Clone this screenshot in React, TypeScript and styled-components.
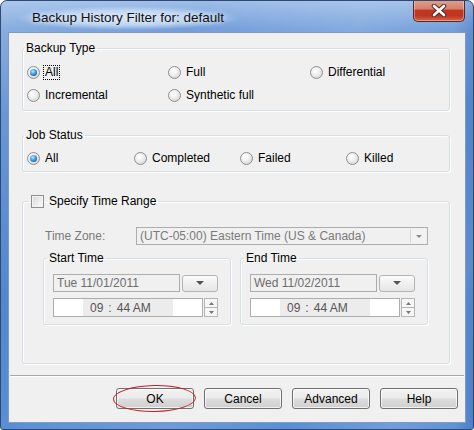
import React from "react";
import styled, { createGlobalStyle } from "styled-components";

const Global = createGlobalStyle`
  html, body { margin: 0; padding: 0; background: #ffffff; }
  body { width: 474px; height: 430px; overflow: hidden; }
  * { box-sizing: border-box; }
`;

const UI = `"Liberation Sans", Arial, sans-serif`;

const Window = styled.div`
  width: 474px;
  height: 430px;
  display: flex;
  flex-direction: column;
  border: 1px solid #2f4a70;
  border-radius: 7px 7px 3px 3px;
  overflow: hidden;
  font-family: ${UI};
  font-size: 12px;
  color: #000;
  background:
    linear-gradient(115deg, rgba(255,255,255,0.16) 0%, rgba(255,255,255,0) 30%, rgba(255,255,255,0.12) 55%, rgba(255,255,255,0) 72%, rgba(255,255,255,0.14) 88%, rgba(255,255,255,0) 100%),
    linear-gradient(90deg, rgba(0,0,0,0) 0%, rgba(0,0,0,0) 96%, rgba(20,60,140,0.18) 100%),
    linear-gradient(180deg, #9dbde8 0px, #749fda 28px, #5589d1 110px, #4a80cc 300px, #5a8fd6 430px);
`;

const TitleBar = styled.div`
  height: 31px;
  flex: none;
  display: flex;
  align-items: flex-start;
  justify-content: space-between;
`;

const TitleText = styled.div`
  margin-top: 5px;
  margin-left: 15px;
  padding: 3px 16px 4px 16px;
  font-size: 13.5px;
  line-height: 17px;
  color: #101010;
  background: radial-gradient(closest-side, rgba(225,238,252,0.85) 0%, rgba(210,228,248,0.7) 60%, rgba(200,222,246,0) 100%);
  text-shadow: 0 0 6px rgba(255,255,255,0.9);
`;

const CloseButton = styled.div`
  width: 52px;
  height: 22px;
  margin-top: -1px;
  margin-right: 8px;
  display: flex;
  align-items: center;
  justify-content: center;
  border: 1px solid #5a2620;
  border-top: none;
  border-radius: 0 0 5px 5px;
  background: linear-gradient(180deg, #e4a190 0%, #d5806a 42%, #c23621 50%, #bd3520 75%, #d6684a 100%);
  box-shadow: inset 0 0 0 1px rgba(255,255,255,0.35);
`;

const Client = styled.div`
  flex: 1;
  margin: 0 7px 6px 7px;
  border: 1px solid #7f9bc2;
  background: #f0f0f0;
  display: flex;
  flex-direction: column;
`;

const Body = styled.div`
  padding: 8px 15px 0 13px;
  display: flex;
  flex-direction: column;
`;

const Group = styled.fieldset<{ $pad: string; $mt: number; $w?: number }>`
  margin: ${p => p.$mt}px 0 0 0;
  min-width: 0;
  width: ${p => (p.$w ? `${p.$w}px` : "auto")};
  border: 1px solid #d5dfe5;
  border-radius: 3px;
  box-shadow: inset 1px 1px 0 #ffffff, 1px 1px 0 #ffffff;
  padding: ${p => p.$pad};
`;

const Legend = styled.legend<{ $shift: number }>`
  padding: 0 2px;
  margin-left: ${p => p.$shift}px;
  height: 14px;
  line-height: 14px;
  font-size: 12px;
  color: #000;
  display: flex;
  align-items: center;
  gap: 5px;
`;

const RadioGrid = styled.div<{ $cols: string }>`
  display: grid;
  grid-template-columns: ${p => p.$cols};
  grid-auto-rows: 23px;
`;

const Option = styled.label`
  display: flex;
  align-items: center;
  gap: 3px;
  white-space: nowrap;
`;

const RadioCircle = styled.span<{ $on?: boolean }>`
  position: relative;
  width: 13px;
  height: 13px;
  flex: none;
  border-radius: 50%;
  border: 1px solid #8e8f8f;
  background: radial-gradient(circle at 40% 35%, #ffffff 0%, #f2f2f2 35%, #cdcdcd 100%);
  &::after {
    content: "";
    display: ${p => (p.$on ? "block" : "none")};
    position: absolute;
    left: 2px;
    top: 2px;
    width: 7px;
    height: 7px;
    border-radius: 50%;
    background: radial-gradient(circle at 40% 35%, #c4ecff 0%, #4aa3e8 40%, #1b5aa6 80%, #0f3e7c 100%);
  }
`;

const OptionText = styled.span<{ $focus?: boolean }>`
  padding: 0 1px;
  line-height: 13px;
  border: 1px ${p => (p.$focus ? "dotted #000" : "solid transparent")};
`;

const CheckBox = styled.span`
  width: 13px;
  height: 13px;
  flex: none;
  border: 1px solid #8e8f8f;
  background: linear-gradient(135deg, #d8d8d8 0%, #eeeeee 60%, #fbfbfb 100%);
  box-shadow: inset 0 0 0 1px #f4f4f4;
`;

const Row = styled.div<{ $mt?: number; $gap?: number }>`
  display: flex;
  align-items: center;
  margin-top: ${p => p.$mt ?? 0}px;
  gap: ${p => p.$gap ?? 0}px;
`;

const FieldLabel = styled.span`
  width: 93px;
  flex: none;
  padding-left: 2px;
  color: #7a7a7a;
`;

const Combo = styled.div`
  flex: 1;
  height: 18px;
  display: flex;
  align-items: center;
  border: 1px solid #adadad;
  background: #f0f0f0;
  color: #7a7a7a;
  padding: 0 1px 0 3px;
`;

const ComboText = styled.span`
  flex: 1;
  white-space: nowrap;
`;

const ComboArrow = styled.div`
  width: 16px;
  height: 14px;
  display: flex;
  align-items: center;
  justify-content: center;
  border-left: 1px solid #d6d6d6;
  background: #f2f2f2;
`;

const Columns = styled.div`
  display: flex;
  gap: 9px;
  margin-top: 6px;
`;

const DateBox = styled.div`
  flex: 1;
  height: 18px;
  display: flex;
  align-items: center;
  padding-left: 3px;
  border: 1px solid #adadad;
  background: #f0f0f0;
  color: #6d6d6d;
  white-space: nowrap;
`;

const DropButton = styled.div`
  width: 36px;
  height: 17px;
  flex: none;
  display: flex;
  align-items: center;
  justify-content: center;
  border: 1px solid #b4b4b4;
  border-radius: 3px;
  background: linear-gradient(180deg, #fbfbfb 0%, #f0f0f0 50%, #e6e6e6 100%);
`;

const TimeBox = styled.div`
  flex: 1;
  height: 19px;
  display: flex;
  align-items: stretch;
  border: 1px solid #adadad;
  background: #ffffff;
  padding: 0 0 0 29px;
`;

const TimeInner = styled.div`
  width: 90px;
  display: flex;
  align-items: center;
  padding-left: 7px;
  background: #ececec;
  color: #555;
  white-space: nowrap;
`;

const TimeSep = styled.span`
  margin: 0 5px 0 5px;
`;

const Spin = styled.div`
  width: 14px;
  height: 19px;
  flex: none;
  display: flex;
  flex-direction: column;
  border: 1px solid #b5b5b5;
  background: #f6f6f6;
`;

const SpinHalf = styled.div<{ $up?: boolean }>`
  flex: 1;
  display: flex;
  align-items: center;
  justify-content: center;
  border-bottom: ${p => (p.$up ? "1px solid #b5b5b5" : "none")};
`;

const Separator = styled.div`
  margin: 11px 1px 0 1px;
  height: 2px;
  border-top: 1px solid #a8a8a8;
  border-bottom: 1px solid #ffffff;
`;

const Footer = styled.div`
  display: flex;
  justify-content: flex-end;
  gap: 10px;
  padding: 11px 7px 0 0;
`;

const ButtonWrap = styled.div`
  position: relative;
`;

const Button = styled.div`
  width: 78px;
  height: 21px;
  display: flex;
  align-items: center;
  justify-content: center;
  border: 1px solid #707070;
  border-radius: 3px;
  background: linear-gradient(180deg, #f2f2f2 0%, #ebebeb 48%, #dddddd 52%, #cfcfcf 100%);
  box-shadow: inset 0 0 0 1px rgba(255,255,255,0.7);
  font-size: 12px;
  color: #000;
`;

const Ellipse = styled.div`
  position: absolute;
  left: -3px;
  top: -3px;
  width: 83px;
  height: 27px;
  border: 1.5px solid #c42030;
  border-radius: 50%;
  transform: rotate(-1deg);
  pointer-events: none;
`;

const DownTri = ({ w = 8, h = 4, c = "#555" }: { w?: number; h?: number; c?: string }) => (
  <svg width={w} height={h} viewBox={`0 0 ${w} ${h}`}>
    <polygon points={`0,0 ${w},0 ${w / 2},${h}`} fill={c} />
  </svg>
);

const UpTri = ({ c = "#777" }: { c?: string }) => (
  <svg width="5" height="3" viewBox="0 0 5 3">
    <polygon points="0,3 5,3 2.5,0" fill={c} />
  </svg>
);

const Radio = ({ label, on, focus }: { label: string; on?: boolean; focus?: boolean }) => (
  <Option>
    <RadioCircle $on={on} />
    <OptionText $focus={focus}>{label}</OptionText>
  </Option>
);

const TimeGroup = ({ title, date }: { title: string; date: string }) => (
  <Group $mt={0} $w={188} $pad="9px 12px 7px 9px">
    <Legend $shift={-6}>{title}</Legend>
    <Row $gap={2}>
      <DateBox>{date}</DateBox>
      <DropButton>
        <DownTri />
      </DropButton>
    </Row>
    <Row $mt={6} $gap={1}>
      <TimeBox>
        <TimeInner>
          <span>09</span>
          <TimeSep>:</TimeSep>
          <span>44 AM</span>
        </TimeInner>
      </TimeBox>
      <Spin>
        <SpinHalf $up>
          <UpTri />
        </SpinHalf>
        <SpinHalf>
          <DownTri w={5} h={3} c="#777" />
        </SpinHalf>
      </Spin>
    </Row>
  </Group>
);

export default function App() {
  return (
    <>
      <Global />
      <Window>
        <TitleBar>
          <TitleText>Backup History Filter for: default</TitleText>
          <CloseButton>
            <svg width="16" height="13" viewBox="0 0 16 13">
              <path d="M3 2 L13 11 M13 2 L3 11" stroke="#5a2a24" strokeWidth="4.6" strokeLinecap="round" />
              <path d="M3 2 L13 11 M13 2 L3 11" stroke="#ffffff" strokeWidth="2.6" strokeLinecap="round" />
            </svg>
          </CloseButton>
        </TitleBar>
        <Client>
          <Body>
            <Group $mt={0} $pad="6px 0 3px 4px">
              <Legend $shift={-3}>Backup Type</Legend>
              <RadioGrid $cols="141px 142px auto">
                <Radio label="All" on focus />
                <Radio label="Full" />
                <Radio label="Differential" />
                <Radio label="Incremental" />
                <Radio label="Synthetic full" />
              </RadioGrid>
            </Group>
            <Group $mt={17} $pad="5px 0 1px 4px">
              <Legend $shift={-3}>Job Status</Legend>
              <RadioGrid $cols="107px 106px 106px auto">
                <Radio label="All" on />
                <Radio label="Completed" />
                <Radio label="Failed" />
                <Radio label="Killed" />
              </RadioGrid>
            </Group>
            <Group $mt={22} $pad="19px 21px 38px 20px">
              <Legend $shift={-14}>
                <CheckBox />
                <span>Specify Time Range</span>
              </Legend>
              <Row>
                <FieldLabel>Time Zone:</FieldLabel>
                <Combo>
                  <ComboText>(UTC-05:00) Eastern Time (US &amp; Canada)</ComboText>
                  <ComboArrow>
                    <DownTri w={6} h={3} c="#8a8a8a" />
                  </ComboArrow>
                </Combo>
              </Row>
              <Columns>
                <TimeGroup title="Start Time" date="Tue 11/01/2011" />
                <TimeGroup title="End Time" date="Wed 11/02/2011" />
              </Columns>
            </Group>
          </Body>
          <Separator />
          <Footer>
            <ButtonWrap>
              <Button>OK</Button>
              <Ellipse />
            </ButtonWrap>
            <Button>Cancel</Button>
            <Button>Advanced</Button>
            <Button>Help</Button>
          </Footer>
        </Client>
      </Window>
    </>
  );
}
